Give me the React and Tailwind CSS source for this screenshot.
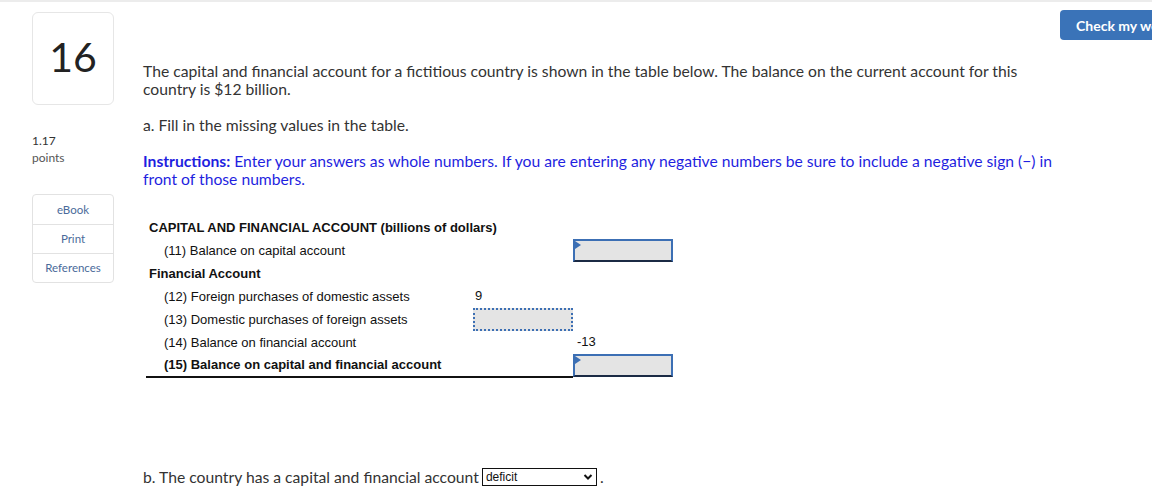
import React from 'react';

const font = { fontFamily: 'Lato, "Open Sans", sans-serif' };
const arial = { fontFamily: '"Liberation Sans", Arial, sans-serif' };

const InputCell = () => (
    <div className="relative w-[100px] h-[23px] bg-[#e4e4e4] border-2 border-[#3c6fb4] border-b-[#1b2a44]">
        <div className="absolute left-0 top-0 w-0 h-0 border-y-[4px] border-y-transparent border-l-[6px] border-l-[#3c6fb4]" />
    </div>
);

const rows = [
    { label: '(12) Foreign purchases of domestic assets', mid: '9' },
    { label: '(13) Domestic purchases of foreign assets', mid: 'dotted' },
    { label: '(14) Balance on financial account', right: '-13' },
];

const App = () => {
    return (
        <div className="w-[1152px] h-[495px] bg-white overflow-hidden border-t-2 border-[#ececec] text-[#222]" style={font}>
            <div className="flex">
                {/* Left column */}
                <div className="w-[143px] shrink-0 pl-[32px] pt-[10px]">
                    <div className="w-[82px] h-[93px] border border-[#e6e6e6] rounded-md flex items-center justify-center text-[41px] text-[#222] pb-1">
                        16
                    </div>
                    <div className="mt-[27px] text-[12px] leading-[17px] text-[#333]">
                        <div>1.17</div>
                        <div className="text-[#555]">points</div>
                    </div>
                    <div className="mt-[28px] w-[82px] border border-[#e2e2e2] rounded-sm text-[11.5px] text-[#4a6a9a] text-center">
                        <div className="h-[30px] flex items-center justify-center border-b border-[#e2e2e2]">eBook</div>
                        <div className="h-[29px] flex items-center justify-center border-b border-[#e2e2e2]">Print</div>
                        <div className="h-[28px] flex items-center justify-center">References</div>
                    </div>
                </div>

                {/* Main */}
                <div className="flex-1 relative">
                    <div className="pt-[60px] pr-[92px] text-[15.7px] leading-[18px] text-[#333]">
                        <p>
                            The capital and financial account for a fictitious country is shown in the table below. The balance on the current account for this
                            country is $12 billion.
                        </p>
                        <p className="mt-[18px]">a. Fill in the missing values in the table.</p>
                        <p className="mt-[18px] text-[#1f1fe0]">
                            <b>Instructions:</b> Enter your answers as whole numbers. If you are entering any negative numbers be sure to include a negative sign (−) in front of those numbers.
                        </p>

                        <table className="mt-[28px] ml-[3px] border-collapse text-[13px] text-[#111]" style={arial}>
                            <tbody>
                                <tr className="h-[23px]">
                                    <td colSpan={3} className="pl-[3px] font-bold">CAPITAL AND FINANCIAL ACCOUNT (billions of dollars)</td>
                                </tr>
                                <tr className="h-[23px]">
                                    <td className="w-[324px] pl-[18px]">(11) Balance on capital account</td>
                                    <td className="w-[102px]"></td>
                                    <td className="w-[100px]"><InputCell /></td>
                                </tr>
                                <tr className="h-[23px]">
                                    <td colSpan={3} className="pl-[3px] font-bold">Financial Account</td>
                                </tr>
                                {rows.map((r) => (
                                    <tr key={r.label} className="h-[23px]">
                                        <td className="pl-[18px]">{r.label}</td>
                                        <td className="pl-[3px]">
                                            {r.mid === 'dotted' ? (
                                                <div className="w-[100px] h-[23px] bg-[#e4e4e4] border-2 border-dotted border-[#3c6fb4]" />
                                            ) : (
                                                <span className="pl-[2px] relative top-[-1px]">{r.mid}</span>
                                            )}
                                        </td>
                                        <td className="pl-[4px]">
                                            {r.right && <span className="relative top-[-1px]">{r.right}</span>}
                                        </td>
                                    </tr>
                                ))}
                                <tr className="h-[23px]">
                                    <td className="pl-[18px] font-bold border-b-2 border-[#111]">(15) Balance on capital and financial account</td>
                                    <td className="border-b-2 border-[#111] pl-[3px]"></td>
                                    <td><InputCell /></td>
                                </tr>
                            </tbody>
                        </table>

                        <div className="mt-[90px] flex items-center">
                            <span>b. The country has a capital and financial account</span>
                            <div
                                className="ml-[3px] w-[115px] h-[18px] border border-[#111] flex items-center justify-between pl-[3px] pr-[3px] text-[12px] text-[#111]"
                                style={arial}
                            >
                                <span>deficit</span>
                                <svg width="10" height="8" viewBox="0 0 10 8" fill="none" stroke="#111" strokeWidth="2">
                                    <path d="M1.5 2 L5 5.5 L8.5 2" />
                                </svg>
                            </div>
                            <span className="ml-[3px]">.</span>
                        </div>
                    </div>

                    <button className="absolute top-[8px] left-[917px] h-[30px] w-[120px] rounded-sm bg-[#3a73b8] text-white font-bold text-[14px] pl-[16px] text-left whitespace-nowrap">
                        Check my work
                    </button>
                </div>
            </div>
        </div>
    );
};

export default App;
